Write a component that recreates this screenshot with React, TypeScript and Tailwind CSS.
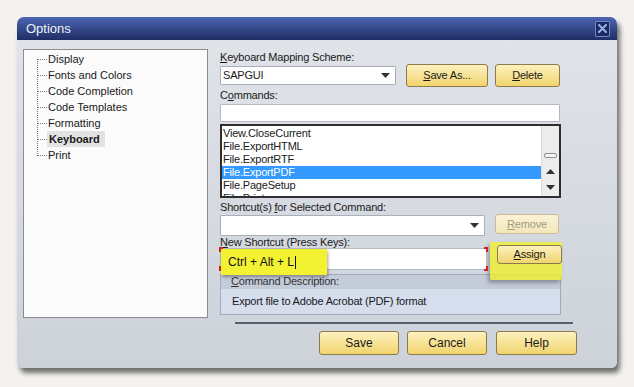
import React from "react";

const font = { fontFamily: '"Liberation Sans", Arial, sans-serif' };

function Acc({ text, i }: { text: string; i: number }) {
  return (
    <>
      {text.slice(0, i)}
      <span className="underline underline-offset-[1px]">{text[i]}</span>
      {text.slice(i + 1)}
    </>
  );
}

function YButton({
  children,
  className = "",
  disabled = false,
}: {
  children: React.ReactNode;
  className?: string;
  disabled?: boolean;
}) {
  return (
    <div
      className={
        "flex items-center justify-center rounded-[3px] border text-[11px] " +
        (disabled
          ? "border-[#c8bc95] bg-gradient-to-b from-[#fbf3d8] to-[#f3e6b8] text-[#a39c86] "
          : "border-[#8a7a4c] bg-gradient-to-b from-[#fdf1bd] to-[#f1d46c] text-[#1a1a1a] ") +
        className
      }
    >
      {children}
    </div>
  );
}

function Arrow({ up = false }: { up?: boolean }) {
  return (
    <svg width="9" height="5" viewBox="0 0 9 5">
      <path d={up ? "M0 5 L4.5 0 L9 5 Z" : "M0 0 L4.5 5 L9 0 Z"} fill="#333" />
    </svg>
  );
}

const tree = ["Display", "Fonts and Colors", "Code Completion", "Code Templates", "Formatting", "Keyboard", "Print"];
const commands = ["View.CloseCurrent", "File.ExportHTML", "File.ExportRTF", "File.ExportPDF", "File.PageSetup", "File.Print"];

export default function App() {
  return (
    <div className="w-[634px] h-[387px] bg-[#f3f2f0] pt-[17px] pl-[17px]" style={font}>
      <div className="w-[600px] h-[351px] flex flex-col rounded-t-[7px] rounded-b-[6px] overflow-hidden bg-gradient-to-b from-[#e1e4e9] to-[#cdd2da] shadow-[3px_5px_5px_rgba(0,0,0,0.55)]">
        {/* title bar */}
        <div className="h-[23px] flex items-center justify-between pl-[9px] pr-[7px] bg-gradient-to-b from-[#4d66b2] to-[#1f2d66]">
          <span className="text-[13px] text-[#eef1f8]">Options</span>
          <div className="w-[15px] h-[16px] flex items-center justify-center bg-[#1c2a60] border border-[#6f86c8] rounded-[1px]">
            <svg width="9" height="9" viewBox="0 0 9 9">
              <path d="M1 1 L8 8 M8 1 L1 8" stroke="#9db2ea" strokeWidth="2" strokeLinecap="round" />
            </svg>
          </div>
        </div>

        {/* body */}
        <div className="flex-1 flex flex-col">
          <div className="flex items-start pt-[9px]">
            {/* tree */}
            <div className="ml-[6px] w-[185px] h-[269px] bg-[#fbfbfb] border border-[#8c8c8c] relative pt-[1px] pl-[13px] text-[11px] text-[#1a1a1a]">
              <div className="absolute left-[13px] top-[9px] h-[97px] border-l border-dotted border-[#7a7a7a]" />
              {tree.map((t) => (
                <div key={t} className="h-[16px] flex items-center">
                  <span className="w-[10px] border-t border-dotted border-[#7a7a7a]" />
                  <span
                    className={
                      "h-[16px] flex items-center px-[1px] " +
                      (t === "Keyboard" ? "font-bold bg-[#e2e2e2] pr-[5px] pl-[2px]" : "")
                    }
                  >
                    {t}
                  </span>
                </div>
              ))}
            </div>

            {/* right column */}
            <div className="ml-[12px] w-[342px] flex flex-col text-[11px] tracking-[-0.2px] text-[#1a1a1a]">
              <div className="mt-[2px] h-[13px] leading-[13px]">
                <Acc text="Keyboard Mapping Scheme:" i={0} />
              </div>
              <div className="h-[23px] flex items-center">
                <div className="w-[176px] h-[19px] bg-white border border-[#a9aeb8] rounded-[1px] flex items-center justify-between pl-[2px] pr-[5px]">
                  <span>SAPGUI</span>
                  <Arrow />
                </div>
                <YButton className="ml-[10px] w-[82px] h-[23px]">
                  <Acc text="Save As..." i={0} />
                </YButton>
                <YButton className="ml-[7px] w-[65px] h-[23px]">
                  <Acc text="Delete" i={0} />
                </YButton>
              </div>
              <div className="mt-[2px] h-[13px] leading-[13px]">
                <Acc text="Commands:" i={1} />
              </div>
              <div className="mt-[2px] w-[340px] h-[18px] bg-white border border-[#b3b8c2] rounded-[1px]" />
              <div className="mt-[2px] w-[341px] h-[74px] bg-white border-2 border-[#2e2e2e] flex overflow-hidden">
                <div className="flex-1 pt-[1px] leading-[13px]">
                  {commands.map((c) => (
                    <div
                      key={c}
                      className={"h-[13px] pl-[1px] " + (c === "File.ExportPDF" ? "bg-[#3399ff] text-white" : "")}
                    >
                      {c}
                    </div>
                  ))}
                </div>
                <div className="w-[18px] bg-[#ececec] border-l border-[#dcdcdc] flex flex-col items-center pt-[27px]">
                  <div className="w-[13px] h-[5px] rounded-[2px] border border-[#8e8e8e] bg-[#f4f4f4]" />
                  <div className="mt-[11px]">
                    <Arrow up />
                  </div>
                  <div className="mt-[11px]">
                    <Arrow />
                  </div>
                </div>
              </div>
              <div className="mt-[3px] h-[13px] leading-[13px]">
                Shortcut(s) <Acc text="for" i={0} /> Selected Command:
              </div>
              <div className="h-[22px] flex items-start">
                <div className="mt-[1px] w-[265px] h-[21px] bg-white border border-[#a9aeb8] rounded-[1px] flex items-center justify-end pr-[5px]">
                  <Arrow />
                </div>
                <YButton disabled className="ml-[10px] w-[64px] h-[20px]">
                  <Acc text="Remove" i={0} />
                </YButton>
              </div>
              <div className="h-[12px] leading-[12px]">
                <Acc text="New Shortcut (Press Keys):" i={0} />
              </div>
              <div className="h-[22px] flex items-start relative">
                <div className="w-[267px] h-[22px] bg-white border border-[#b3b8c2] relative">
                  <span className="absolute left-[-2px] top-[-2px] w-[4px] h-[5px] border-l-2 border-t-2 border-[#d42020]" />
                  <span className="absolute right-[-2px] top-[-2px] w-[4px] h-[5px] border-r-2 border-t-2 border-[#d42020]" />
                  <span className="absolute left-[-2px] bottom-[-2px] w-[4px] h-[5px] border-l-2 border-b-2 border-[#d42020]" />
                  <span className="absolute right-[-2px] bottom-[-2px] w-[4px] h-[5px] border-r-2 border-b-2 border-[#d42020]" />
                  <div className="absolute left-0 top-0 w-[106px] h-[26px] bg-[#f2f232] shadow-[1px_2px_3px_rgba(0,0,0,0.35)] flex items-center pl-[7px] text-[12px] tracking-normal text-[#111]">
                    Ctrl + Alt + L<span className="ml-[1px] w-px h-[13px] bg-[#111]" />
                  </div>
                </div>
                <div className="ml-[3px] w-[72px] h-[38px] -mt-[6px] bg-[#f0ef2e]/80 rounded-[2px] shadow-[-2px_3px_4px_rgba(0,0,0,0.3)] flex items-start pl-[7px] pt-[3px]">
                  <YButton className="w-[65px] h-[19px] from-[#f8e860] to-[#efd43a] border-[#7a6a30]">
                    <Acc text="Assign" i={0} />
                  </YButton>
                </div>
              </div>
              <div className="mt-[4px] w-[341px] h-[41px] border border-[#a0aabb] flex flex-col">
                <div className="h-[14px] bg-[#c4ccda] pl-[10px] leading-[13px] text-[#333]">
                  <Acc text="Command Description:" i={0} />
                </div>
                <div className="flex-1 bg-[#d6dded] pl-[11px] flex items-center">
                  Export file to Adobe Acrobat (PDF) format
                </div>
              </div>
            </div>
          </div>

          {/* footer */}
          <div className="mt-[4px] ml-[218px] w-[338px] border-t-2 border-[#56606d]" />
          <div className="mt-[7px] flex justify-end pr-[40px] gap-[8px]">
            <YButton className="w-[80px] h-[24px] text-[12px]">Save</YButton>
            <YButton className="w-[80px] h-[24px] text-[12px]">Cancel</YButton>
            <YButton className="ml-[1px] w-[81px] h-[24px] text-[12px]">Help</YButton>
          </div>
        </div>
      </div>
    </div>
  );
}
